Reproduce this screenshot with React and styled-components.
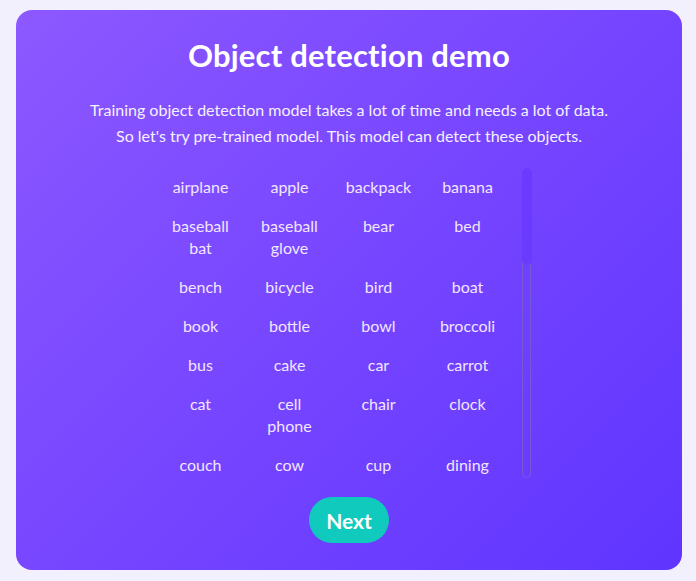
import React from "react";
import styled, { createGlobalStyle } from "styled-components";

const LABELS = [
  "airplane", "apple", "backpack", "banana", "baseball bat", "baseball glove",
  "bear", "bed", "bench", "bicycle", "bird", "boat", "book", "bottle", "bowl",
  "broccoli", "bus", "cake", "car", "carrot", "cat", "cell phone", "chair",
  "clock", "couch", "cow", "cup", "dining table", "dog", "donut", "elephant",
  "fire hydrant", "fork", "frisbee", "giraffe", "hair drier", "handbag",
  "horse", "hot dog", "keyboard", "kite", "knife", "laptop", "microwave",
  "motorcycle", "mouse", "orange", "oven", "parking meter", "person", "pizza",
  "potted plant", "refrigerator", "remote", "sandwich", "scissors", "sheep",
  "sink", "skateboard", "skis", "snowboard", "spoon", "sports ball",
  "stop sign", "suitcase", "surfboard", "teddy bear", "tennis racket", "tie",
  "toaster", "toilet", "toothbrush", "traffic light", "train", "truck", "tv",
  "umbrella", "vase", "wine glass", "zebra",
];

const GlobalStyle = createGlobalStyle`
  html, body {
    margin: 0;
    padding: 0;
    background: #f3f0fe;
    font-family: Lato, "Noto Sans", sans-serif;
  }
`;

const Page = styled.div`
  padding: 10px 14px 11px 16px;
`;

const Card = styled.div`
  box-sizing: border-box;
  height: 560px;
  padding: 27px 0 27px;
  border-radius: 16px;
  background: linear-gradient(135deg, #8d58ff 0%, #7645ff 50%, #5f35ff 100%);
  display: flex;
  flex-direction: column;
  align-items: center;
  color: #fff;
`;

const Title = styled.h1`
  margin: 0;
  font-size: 31px;
  line-height: 36px;
  font-weight: 700;
  letter-spacing: 0.2px;
`;

const Intro = styled.p`
  margin: 24px 0 0;
  font-size: 16px;
  line-height: 26px;
  text-align: center;
  color: #f5f0ff;
`;

/* list + hand-drawn scrollbar side by side */
const ListRow = styled.div`
  align-self: flex-start;
  margin: 19px 0 0 140px;
  display: flex;
  gap: 10px;
  height: 310px;
`;

const LabelList = styled.div`
  box-sizing: border-box;
  width: 356px;
  height: 100%;
  padding-top: 8px;
  overflow: hidden;
`;

const Grid = styled.div`
  display: grid;
  grid-template-columns: repeat(4, 89px);
  row-gap: 17px;
`;

const Label = styled.div`
  padding: 0 11px;
  font-size: 16px;
  line-height: 22px;
  text-align: center;
  color: #f2e6ff;
`;

const Track = styled.div`
  box-sizing: border-box;
  width: 9px;
  height: 100%;
  border-radius: 5px;
  border: 1.5px solid rgba(120, 96, 205, 0.8);
  position: relative;
`;

const Thumb = styled.div`
  position: absolute;
  top: -1.5px;
  left: -1.5px;
  right: -1.5px;
  height: 97px;
  border-radius: 5px;
  background: #6a3bff;
`;

const NextButton = styled.button`
  margin-top: 19px;
  width: 80px;
  height: 46px;
  border: none;
  border-radius: 23px;
  background: #0fcabd;
  color: #fff;
  font-family: inherit;
  font-size: 21px;
  font-weight: 700;
  cursor: pointer;
`;

export default function App() {
  return (
    <Page>
      <GlobalStyle />
      <Card>
        <Title>Object detection demo</Title>
        <Intro>
          Training object detection model takes a lot of time and needs a lot of data.
          <br />
          So let's try pre-trained model. This model can detect these objects.
        </Intro>
        <ListRow>
          <LabelList>
            <Grid>
              {LABELS.map((name) => (
                <Label key={name}>{name}</Label>
              ))}
            </Grid>
          </LabelList>
          <Track>
            <Thumb />
          </Track>
        </ListRow>
        <NextButton>Next</NextButton>
      </Card>
    </Page>
  );
}
